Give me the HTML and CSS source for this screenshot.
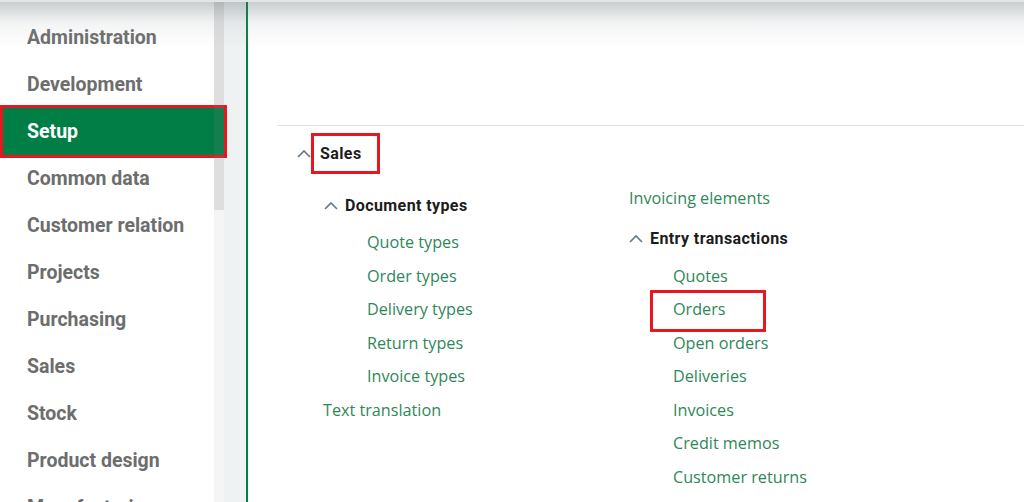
FILE: index.html
```html
<!DOCTYPE html>
<html lang="en">
<head>
<meta charset="utf-8">
<title>Setup - Sales</title>
<link rel="stylesheet" href="styles.css">
</head>
<body>
<div class="app">
  <nav class="sidebar">
    <ul class="menu">
      <li class="menu-item">Administration</li>
      <li class="menu-item">Development</li>
      <li class="menu-item active">Setup</li>
      <li class="menu-item">Common data</li>
      <li class="menu-item">Customer relation</li>
      <li class="menu-item">Projects</li>
      <li class="menu-item">Purchasing</li>
      <li class="menu-item">Sales</li>
      <li class="menu-item">Stock</li>
      <li class="menu-item">Product design</li>
      <li class="menu-item">Manufacturing</li>
    </ul>
    <div class="scroll-thumb"></div>
  </nav>
  <div class="gutter"></div>
  <main class="content">
    <div class="divider"></div>
    <section class="group">
      <div class="group-title">
        <svg class="caret" viewBox="0 0 14 9"><polyline points="1,8 7,2 13,8"/></svg>
        <span class="title-box">Sales</span>
      </div>
      <div class="columns">
        <div class="col col-left">
          <div class="sub-title"><svg class="caret" viewBox="0 0 14 9"><polyline points="1,8 7,2 13,8"/></svg><span>Document types</span></div>
          <ul class="links">
            <li>Quote types</li>
            <li>Order types</li>
            <li>Delivery types</li>
            <li>Return types</li>
            <li>Invoice types</li>
          </ul>
          <div class="link top-link">Text translation</div>
        </div>
        <div class="col col-right">
          <div class="link top-link first">Invoicing elements</div>
          <div class="sub-title"><svg class="caret" viewBox="0 0 14 9"><polyline points="1,8 7,2 13,8"/></svg><span>Entry transactions</span></div>
          <ul class="links">
            <li>Quotes</li>
            <li class="marked">Orders</li>
            <li>Open orders</li>
            <li>Deliveries</li>
            <li>Invoices</li>
            <li>Credit memos</li>
            <li>Customer returns</li>
          </ul>
        </div>
      </div>
    </section>
  </main>
  <div class="top-shadow"></div>
</div>
</body>
</html>
```
FILE: styles.css
```css
* { box-sizing: border-box; }
html, body { margin: 0; padding: 0; }
body {
  width: 1024px;
  height: 502px;
  overflow: hidden;
  background: #ffffff;
  font-family: "Open Sans", "Liberation Sans", sans-serif;
}
.app {
  position: relative;
  display: flex;
  height: 502px;
  overflow: hidden;
}
.sidebar {
  position: relative;
  width: 224px;
  flex: none;
  background: linear-gradient(to right, #ffffff 0, #ffffff 214px, #f5f5f5 214px);
}
.menu {
  list-style: none;
  margin: 0;
  padding: 14px 0 0 0;
}
.menu-item {
  height: 47px;
  line-height: 47px;
  padding-left: 27px;
  font-family: Roboto, "Liberation Sans", sans-serif;
  font-weight: 700;
  font-size: 19.5px;
  color: #6d6d6d;
  white-space: nowrap;
}
.menu-item.active {
  position: relative;
  background: #007e45;
  color: #ffffff;
}
.menu-item.active::after {
  content: "";
  position: absolute;
  left: 0;
  right: -3px;
  top: -3px;
  bottom: -3px;
  border: 3px solid #e8161f;
}
.scroll-thumb {
  position: absolute;
  top: 0;
  right: 0;
  width: 10px;
  height: 210px;
  background: rgba(120, 120, 120, 0.18);
}
.gutter {
  flex: none;
  width: 24px;
  background: #eff2f3;
  border-right: 2px solid #007e45;
}
.content {
  flex: 1;
  padding-top: 125px;
}
.divider {
  height: 1px;
  margin-left: 29px;
  background: #dde3e6;
}
.group {
  padding-left: 49px;
  padding-top: 7px;
}
.caret {
  width: 14px;
  height: 9px;
  fill: none;
  stroke: #667b88;
  stroke-width: 1.7;
  flex: none;
}
.group-title {
  display: flex;
  align-items: center;
  height: 41px;
}
.title-box {
  position: relative;
  width: 69px;
  height: 41px;
  line-height: 35px;
  padding-left: 6px;
  border: 3px solid #e8161f;
  font-family: Roboto, "Liberation Sans", sans-serif;
  font-weight: 700;
  font-size: 16px;
  letter-spacing: 0.4px;
  color: #1c1c1c;
}
.columns {
  display: grid;
  grid-template-columns: 332px 1fr;
}
.sub-title {
  display: flex;
  align-items: center;
  gap: 7px;
  height: 34px;
  margin-top: 14px;
  margin-bottom: 4px;
  font-family: Roboto, "Liberation Sans", sans-serif;
  font-weight: 700;
  font-size: 16px;
  letter-spacing: 0.4px;
  color: #1c1c1c;
}
.col-left .sub-title { padding-left: 27px; }
.col-right .sub-title { padding-left: 0; margin-top: 6px; }
.links {
  list-style: none;
  margin: 0;
  padding: 0;
}
.links li, .link {
  height: 33.5px;
  line-height: 33.5px;
  font-size: 16.2px;
  color: #2f8759;
  white-space: nowrap;
}
.col-left .links li { padding-left: 70px; }
.col-right .links li { padding-left: 44px; }
.col-left .top-link { padding-left: 26px; }
.col-right .top-link.first { margin-top: 8px; }
.links li.marked { position: relative; }
.links li.marked::before {
  content: "";
  position: absolute;
  left: 21px;
  width: 110px;
  top: -3px;
  bottom: -5px;
  border: 3px solid #e8161f;
}
.top-shadow {
  position: absolute;
  left: 0;
  top: 0;
  right: 0;
  height: 48px;
  border-top: 2px solid #e2e4e5;
  background: linear-gradient(to bottom, rgba(90, 100, 105, 0.32), rgba(150, 160, 165, 0.12) 45%, rgba(255, 255, 255, 0));
  pointer-events: none;
}
```
